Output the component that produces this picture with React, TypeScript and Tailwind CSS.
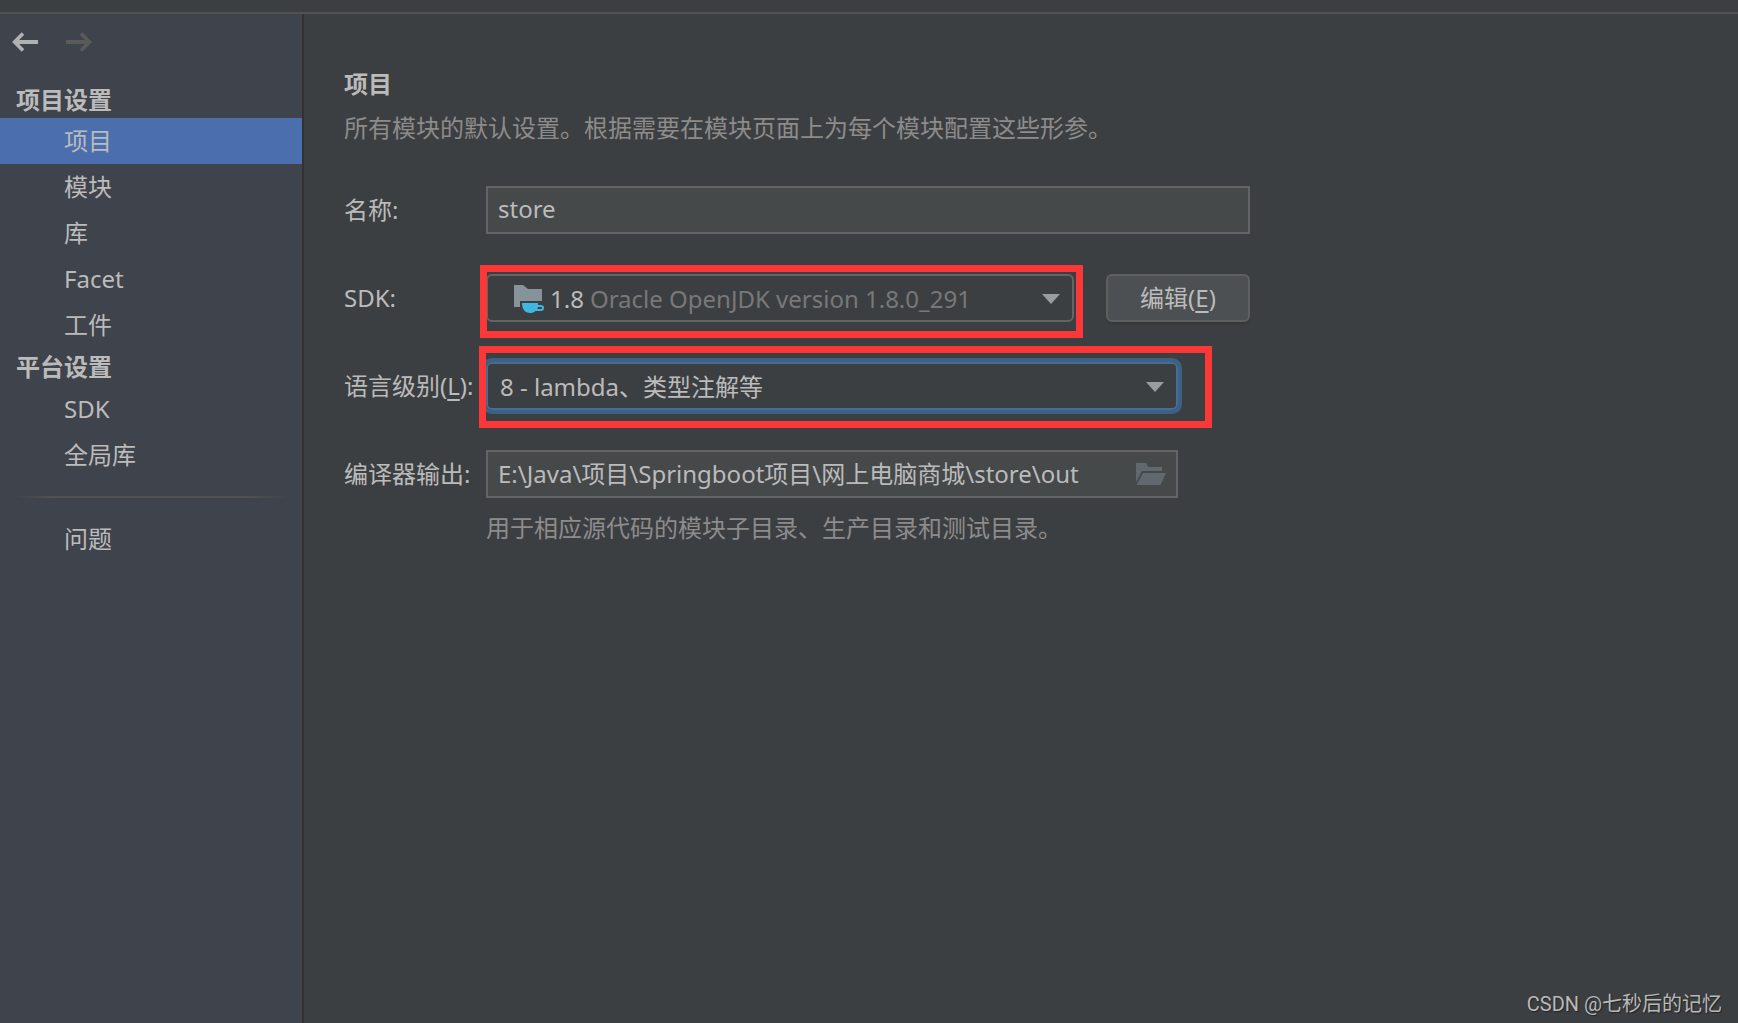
import { useState } from "react";
import type { ReactNode } from "react";

const projectItems = ["项目", "模块", "库", "Facet", "工件"];
const platformItems = ["SDK", "全局库"];

function ArrowLeft({ className }: { className?: string }) {
  return (
    <svg className={className} width="26" height="20" viewBox="0 0 26 20" fill="none" stroke="currentColor" aria-hidden="true">
      <path d="M26 10H3" strokeWidth="4" />
      <path d="M11 1.4L2.6 10L11 18.6" strokeWidth="3.6" />
    </svg>
  );
}

function ChevronIcon() {
  return (
    <svg className="pointer-events-none shrink-0" width="18" height="10" viewBox="0 0 18 10" aria-hidden="true">
      <path d="M0 0H18L9 10Z" fill="#9a9da0" />
    </svg>
  );
}

function SdkIcon() {
  return (
    <svg className="shrink-0" width="30" height="28" viewBox="0 0 30 28" aria-hidden="true">
      <path d="M0 0H9L14 4H28V16H6V22H0Z" fill="#87939a" />
      <path d="M8 18H24V20H27C29 20 30 21.3 30 23C30 25 28.7 26 27 26H21.5C20 27.4 18 28 16 28C11 28 8 24 8 18Z" fill="#40b6e0" />
      <path d="M24 22H27C28.3 22 28.3 24 27 24H23.4Z" fill="#3c3f41" />
    </svg>
  );
}

function FolderOpenIcon() {
  return (
    <svg width="30" height="22" viewBox="0 0 30 22" aria-hidden="true">
      <path d="M0 0H10L12.5 4H26V8H6L0 19Z" fill="#61696e" />
      <path d="M7 10H30L24.5 22H0.5Z" fill="#61696e" />
    </svg>
  );
}

type NavItemProps = {
  label: string;
  selected?: boolean;
  onSelect: (label: string) => void;
};

function NavItem({ label, selected, onSelect }: NavItemProps) {
  return (
    <li>
      <button
        type="button"
        onClick={() => onSelect(label)}
        className={`block h-[46px] w-full pl-16 text-left leading-[46px] outline-none ${selected ? "bg-[#4b6eaf]" : ""}`}
      >
        {label}
      </button>
    </li>
  );
}

function FormRow({ id, label, children }: { id: string; label: ReactNode; children: ReactNode }) {
  return (
    <div className="flex items-center">
      <label htmlFor={id} className="w-[142px] shrink-0 whitespace-nowrap">
        {label}
      </label>
      <div className="min-w-0 flex-1">{children}</div>
    </div>
  );
}

export default function App() {
  const [active, setActive] = useState("项目");

  return (
    <div className="relative flex min-h-screen flex-col bg-[#3c3f41] font-['Noto_Sans','Noto_Sans_CJK_SC',sans-serif] text-2xl text-[#bbbbbb]">
      <div className="h-3.5 border-b-2 border-[#515151]" />

      <div className="flex flex-1">
        {/* Sidebar */}
        <aside className="w-76 shrink-0 border-r-2 border-[#323232] bg-[#3f434c]">
          <div className="flex gap-7 px-3 pt-[18px]">
            <button type="button" aria-label="后退" className="text-[#afb1b3]">
              <ArrowLeft />
            </button>
            <button type="button" aria-label="前进" disabled className="text-[#5a5a5a]">
              <ArrowLeft className="rotate-180" />
            </button>
          </div>

          <nav className="pt-[30px]">
            <h2 className="h-9 pl-4 font-bold leading-9">项目设置</h2>
            <ul>
              {projectItems.map((item) => (
                <NavItem key={item} label={item} selected={item === active} onSelect={setActive} />
              ))}
            </ul>
            <h2 className="h-[38px] pl-4 font-bold leading-[38px]">平台设置</h2>
            <ul>
              {platformItems.map((item) => (
                <NavItem key={item} label={item} selected={item === active} onSelect={setActive} />
              ))}
            </ul>
            <div className="mx-3 my-[18px] h-0.5 bg-[linear-gradient(to_right,transparent,#515151_15%,#515151_85%,transparent)]" />
            <ul>
              <NavItem label="问题" selected={active === "问题"} onSelect={setActive} />
            </ul>
          </nav>
        </aside>

        {/* Project settings */}
        <main className="min-w-0 flex-1 px-10 pt-[52px]">
          <div className="max-w-[906px]">
            <h1 className="font-bold leading-9">项目</h1>
            <p className="mt-2 leading-9 text-[#8c8c8c]">
              所有模块的默认设置。根据需要在模块页面上为每个模块配置这些形参。
            </p>

            <form className="mt-10 flex flex-col gap-10">
              <FormRow id="name" label="名称:">
                <input
                  id="name"
                  type="text"
                  defaultValue="store"
                  className="block h-12 w-full border-2 border-[#646464] bg-[#45494a] px-2.5 pb-1 outline-none"
                />
              </FormRow>

              <FormRow id="sdk" label="SDK:">
                <div className="flex gap-8">
                  <div className="relative flex h-12 min-w-0 flex-1 items-center rounded-md border-2 border-[#646464] pt-0.5 pr-3 pl-[26px]">
                    <SdkIcon />
                    <span className="px-1.5">1.8</span>
                    <select
                      id="sdk"
                      className="h-full min-w-0 flex-1 appearance-none bg-transparent text-[#787878] outline-none"
                    >
                      <option>Oracle OpenJDK version 1.8.0_291</option>
                    </select>
                    <ChevronIcon />
                    <div className="pointer-events-none absolute -top-[11px] -right-[11px] -bottom-[18px] -left-2 border-7 border-[#fc3737]" />
                  </div>
                  <button
                    type="button"
                    className="h-12 w-36 rounded-md border-2 border-[#5e6060] bg-[#4c5052] shadow-[0_2px_1px_#36393b]"
                  >
                    编辑(<span className="underline underline-offset-4">E</span>)
                  </button>
                </div>
              </FormRow>

              <FormRow
                id="level"
                label={
                  <>
                    语言级别(<span className="underline underline-offset-4">L</span>):
                  </>
                }
              >
                <div className="relative mr-18 flex h-12 items-center rounded-md border-2 border-[#466d94] pt-0.5 pr-3 ring-4 ring-[#3d6185]">
                  <select
                    id="level"
                    className="h-full min-w-0 flex-1 appearance-none bg-transparent pl-3 outline-none"
                  >
                    <option>8 - lambda、类型注解等</option>
                  </select>
                  <ChevronIcon />
                  <div className="pointer-events-none absolute -top-[18px] -right-9 -bottom-5 -left-[9px] border-7 border-[#fc3737]" />
                </div>
              </FormRow>

              <div>
                <FormRow id="output" label="编译器输出:">
                  <div className="mr-18 flex h-12 items-center border-2 border-[#646464] bg-[#45494a] pr-2.5">
                    <input
                      id="output"
                      type="text"
                      defaultValue="E:\Java\项目\Springboot项目\网上电脑商城\store\out"
                      className="h-full min-w-0 flex-1 bg-transparent pb-1 pl-2.5 outline-none"
                    />
                    <button type="button" aria-label="浏览">
                      <FolderOpenIcon />
                    </button>
                  </div>
                </FormRow>
                <p className="mt-3 ml-[142px] leading-9 text-[#8c8c8c]">
                  用于相应源代码的模块子目录、生产目录和测试目录。
                </p>
              </div>
            </form>
          </div>
        </main>
      </div>

      <span className="absolute right-4 bottom-[5px] font-[Roboto,'Noto_Sans_CJK_SC',sans-serif] text-xl text-[#b9babb] [text-shadow:1px_1px_1px_#222]">
        CSDN @七秒后的记忆
      </span>
    </div>
  );
}
